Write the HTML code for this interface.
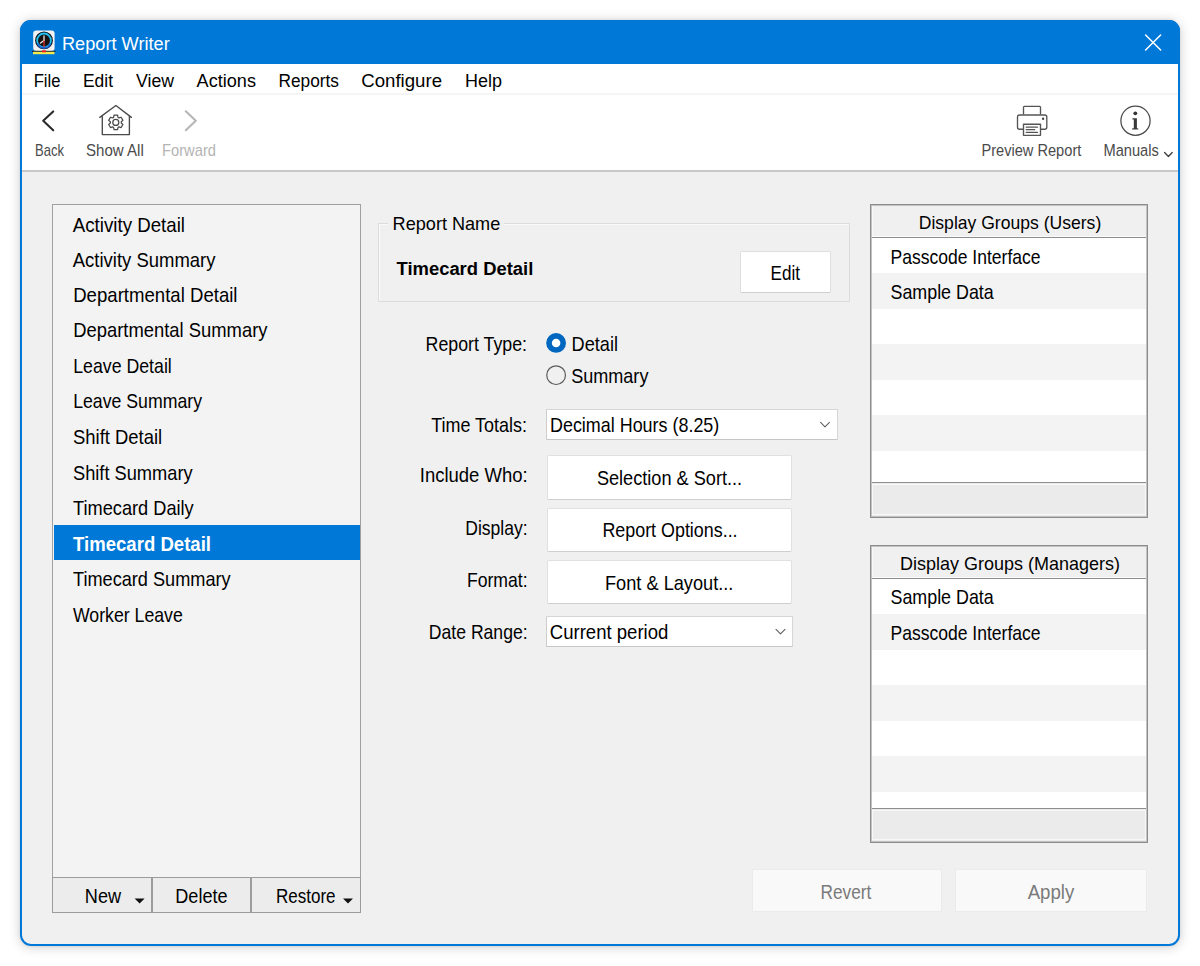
<!DOCTYPE html>
<html><head><meta charset="utf-8"><style>
html,body{margin:0;padding:0;}
body{width:1200px;height:966px;overflow:hidden;background:#fff;position:relative;font-family:"Liberation Sans",sans-serif;}
.t{position:absolute;white-space:nowrap;line-height:1;transform-origin:0 0;}
svg{position:absolute;overflow:visible;font-family:"Liberation Sans",sans-serif;}
</style></head><body>
<div style="position:absolute;left:20.00px;top:20.00px;width:1160.00px;height:926.00px;border-radius:11px;box-shadow:0 1px 12px rgba(0,0,0,0.2), 0 0 3px rgba(0,0,0,0.08);background:#f0f0f0;"></div>
<div style="position:absolute;left:20.00px;top:20.00px;width:1160.00px;height:926.00px;border-radius:11px;border:2px solid #0078d7;box-sizing:border-box;background:#f0f0f0;overflow:hidden;"></div>
<div style="position:absolute;left:20.00px;top:20.00px;width:1160.00px;height:44.00px;border-radius:11px 11px 0 0;background:#0078d7;"></div>
<div style="position:absolute;left:22.00px;top:64.00px;width:1156.00px;height:106.00px;background:#fff;"></div>
<div style="position:absolute;left:22.00px;top:93.00px;width:1156.00px;height:2.00px;background:#f5f5f5;"></div>
<div style="position:absolute;left:22.00px;top:170.00px;width:1156.00px;height:2.00px;background:#c8c8c8;"></div>
<div style="position:absolute;left:52.00px;top:204.00px;width:309.00px;height:709.00px;border:1px solid #a0a0a0;box-sizing:border-box;background:#f3f3f3;"></div>
<div style="position:absolute;left:54.00px;top:525.00px;width:306.00px;height:35.00px;background:#0078d7;"></div>
<div style="position:absolute;left:52.00px;top:877.00px;width:309.00px;height:36.00px;border:1px solid #9c9c9c;box-sizing:border-box;background:#ececec;"></div>
<div style="position:absolute;left:151.00px;top:877.00px;width:1.50px;height:36.00px;background:#9c9c9c;"></div>
<div style="position:absolute;left:250.00px;top:877.00px;width:1.50px;height:36.00px;background:#9c9c9c;"></div>
<div style="position:absolute;left:378.00px;top:223.00px;width:472.00px;height:79.00px;border:1px solid #dcdcdc;box-sizing:border-box;box-shadow:inset 1px 1px 0 #fafafa;"></div>
<div style="position:absolute;left:388.00px;top:214.00px;width:116.00px;height:22.00px;background:#f0f0f0;"></div>
<div style="position:absolute;left:740.00px;top:251.00px;width:91.00px;height:42.00px;background:#fff;border:1px solid #dedede;border-bottom-color:#cfcfcf;box-sizing:border-box;border-radius:2px;"></div>
<div style="position:absolute;left:546.00px;top:409.00px;width:292.00px;height:31.00px;background:#fff;border:1px solid #d6d6d6;border-left-color:#cdcdcd;border-bottom-color:#c6c6c6;box-sizing:border-box;border-radius:1px;"></div>
<div style="position:absolute;left:546.00px;top:616.00px;width:247.00px;height:31.00px;background:#fff;border:1px solid #d6d6d6;border-left-color:#cdcdcd;border-bottom-color:#c6c6c6;box-sizing:border-box;border-radius:1px;"></div>
<div style="position:absolute;left:547.00px;top:455.00px;width:245.00px;height:45.00px;background:#fff;border:1px solid #e0e0e0;border-bottom-color:#cfcfcf;box-sizing:border-box;border-radius:2px;"></div>
<div style="position:absolute;left:547.00px;top:508.00px;width:245.00px;height:44.00px;background:#fff;border:1px solid #e0e0e0;border-bottom-color:#cfcfcf;box-sizing:border-box;border-radius:2px;"></div>
<div style="position:absolute;left:547.00px;top:560.00px;width:245.00px;height:44.00px;background:#fff;border:1px solid #e0e0e0;border-bottom-color:#cfcfcf;box-sizing:border-box;border-radius:2px;"></div>
<div style="position:absolute;left:870.00px;top:204.00px;width:278.00px;height:314.00px;border:1px solid #8c8c8c;box-shadow:inset 0 0 0 1px #c2c2c2;box-sizing:border-box;background:#fff;"></div>
<div style="position:absolute;left:872.00px;top:206.00px;width:274.00px;height:31.00px;background:#f0f0f0;"></div>
<div style="position:absolute;left:872.00px;top:206.00px;width:274.00px;height:31.00px;border-left:1px solid #f8f8f8;border-bottom:1px solid #fbfbfb;box-sizing:border-box;"></div>
<div style="position:absolute;left:872.00px;top:237.00px;width:274.00px;height:1.00px;background:#8e8e8e;"></div>
<div style="position:absolute;left:872.00px;top:273.45px;width:274.00px;height:35.45px;background:#f3f3f3;"></div>
<div style="position:absolute;left:872.00px;top:344.35px;width:274.00px;height:35.45px;background:#f3f3f3;"></div>
<div style="position:absolute;left:872.00px;top:415.25px;width:274.00px;height:35.45px;background:#f3f3f3;"></div>
<div style="position:absolute;left:872.00px;top:482.00px;width:274.00px;height:1.00px;background:#8e8e8e;"></div>
<div style="position:absolute;left:872.00px;top:483.00px;width:274.00px;height:33.00px;background:#ebebeb;"></div>
<div style="position:absolute;left:872.00px;top:484.00px;width:274.00px;height:31.00px;border:1px solid #f8f8f8;box-sizing:border-box;"></div>
<div style="position:absolute;left:870.00px;top:545.00px;width:278.00px;height:298.00px;border:1px solid #8c8c8c;box-shadow:inset 0 0 0 1px #c2c2c2;box-sizing:border-box;background:#fff;"></div>
<div style="position:absolute;left:872.00px;top:547.00px;width:274.00px;height:31.00px;background:#f0f0f0;"></div>
<div style="position:absolute;left:872.00px;top:547.00px;width:274.00px;height:31.00px;border-left:1px solid #f8f8f8;border-bottom:1px solid #fbfbfb;box-sizing:border-box;"></div>
<div style="position:absolute;left:872.00px;top:578.00px;width:274.00px;height:1.00px;background:#8e8e8e;"></div>
<div style="position:absolute;left:872.00px;top:614.45px;width:274.00px;height:35.45px;background:#f3f3f3;"></div>
<div style="position:absolute;left:872.00px;top:685.35px;width:274.00px;height:35.45px;background:#f3f3f3;"></div>
<div style="position:absolute;left:872.00px;top:756.25px;width:274.00px;height:35.45px;background:#f3f3f3;"></div>
<div style="position:absolute;left:872.00px;top:808.00px;width:274.00px;height:1.00px;background:#8e8e8e;"></div>
<div style="position:absolute;left:872.00px;top:809.00px;width:274.00px;height:32.00px;background:#ebebeb;"></div>
<div style="position:absolute;left:872.00px;top:810.00px;width:274.00px;height:30.00px;border:1px solid #f8f8f8;box-sizing:border-box;"></div>
<div style="position:absolute;left:752.00px;top:869.00px;width:190.00px;height:43.00px;background:#f9f9f9;border:1px solid #ebebeb;box-sizing:border-box;border-radius:1px;"></div>
<div style="position:absolute;left:955.00px;top:869.00px;width:192.00px;height:43.00px;background:#f9f9f9;border:1px solid #ebebeb;box-sizing:border-box;border-radius:1px;"></div>
<svg style="left:0;top:0" width="1200" height="966" viewBox="0 0 1200 966">
 <!-- close X -->
 <g stroke="#fff" stroke-width="1.5" stroke-linecap="round"><line x1="1145.6" y1="35" x2="1160.6" y2="50"/><line x1="1160.6" y1="35" x2="1145.6" y2="50"/></g>
 <!-- back chevron -->
 <polyline points="53.2,111.4 43.2,120.8 53.2,130.3" fill="none" stroke="#2b2b2b" stroke-width="2.1" stroke-linecap="round" stroke-linejoin="round"/>
 <!-- forward chevron -->
 <polyline points="185.8,111.3 195.8,120.7 185.8,130.2" fill="none" stroke="#b6b6b6" stroke-width="2.1" stroke-linecap="round" stroke-linejoin="round"/>
 <!-- house -->
 <g fill="none" stroke="#4a4a4a" stroke-width="1.35" stroke-linecap="round" stroke-linejoin="round">
  <polyline points="99.8,117.4 115.9,105.5 131.4,117.4"/>
  <polyline points="102.3,116.3 102.3,134.6 129.4,134.6 129.4,116.3"/>
  <path d="M118.04,117.38 L117.59,115.22 L114.01,115.22 L113.56,117.38 L112.57,117.95 L110.48,117.26 L108.69,120.36 L110.33,121.83 L110.33,122.97 L108.69,124.44 L110.48,127.54 L112.57,126.85 L113.56,127.42 L114.01,129.58 L117.59,129.58 L118.04,127.42 L119.03,126.85 L121.12,127.54 L122.91,124.44 L121.27,122.97 L121.27,121.83 L122.91,120.36 L121.12,117.26 L119.03,117.95 Z" stroke-width="1.25"/>
  <circle cx="115.8" cy="122.4" r="3.0" stroke-width="1.25"/>
 </g>
 <!-- printer -->
 <g fill="none" stroke="#555" stroke-width="1.35" stroke-linejoin="round">
  <path d="M1023.5,114.5 L1023.5,107.2 Q1023.5,106.3 1024.4,106.3 L1039.6,106.3 Q1040.5,106.3 1040.5,107.2 L1040.5,114.5"/>
  <path d="M1023.3,129.2 L1019.5,129.2 Q1017.5,129.2 1017.5,127.2 L1017.5,117 Q1017.5,115 1019.5,115 L1044.8,115 Q1046.8,115 1046.8,117 L1046.8,127.2 Q1046.8,129.2 1044.8,129.2 L1040.8,129.2"/>
  <path d="M1023.5,124.2 L1040.5,124.2 L1040.5,135.3 L1023.5,135.3 Z"/>
  <line x1="1026.2" y1="127.2" x2="1037.5" y2="127.2" stroke-width="1.2" stroke-linecap="round"/>
  <line x1="1026.2" y1="129.7" x2="1034.8" y2="129.7" stroke-width="1.2" stroke-linecap="round"/>
  <line x1="1026.2" y1="132.4" x2="1037.5" y2="132.4" stroke-width="1.2" stroke-linecap="round"/>
 </g>
 <circle cx="1043.1" cy="118.8" r="1.2" fill="#444"/>
 <!-- info -->
 <circle cx="1135.5" cy="120.7" r="14.6" fill="none" stroke="#4a4a4a" stroke-width="1.25"/>
 <circle cx="1135.3" cy="113.3" r="1.9" fill="#333"/>
 <path d="M1132.4,118.3 L1136.9,118.3 L1136.9,128.3 L1138.3,128.6 L1138.3,129.6 L1132,129.6 L1132,128.6 L1133.8,128.3 L1133.8,119.6 L1132.4,119.4 Z" fill="#3a3a3a"/>
 <!-- manuals chevron -->
 <polyline points="1164.6,152.6 1168.4,156.6 1172.2,152.6" fill="none" stroke="#444" stroke-width="1.4" stroke-linecap="round" stroke-linejoin="round"/>
 <!-- combo chevrons -->
 <polyline points="820.6,422.3 825,426.8 829.4,422.3" fill="none" stroke="#606060" stroke-width="1.1" stroke-linecap="round" stroke-linejoin="round"/>
 <polyline points="776,629.3 780.5,633.8 785,629.3" fill="none" stroke="#606060" stroke-width="1.1" stroke-linecap="round" stroke-linejoin="round"/>
 <!-- radios -->
 <circle cx="556.1" cy="342.95" r="9.9" fill="#0067c0"/>
 <circle cx="556.1" cy="342.95" r="4.3" fill="#fff"/>
 <circle cx="556.1" cy="375.15" r="9.35" fill="none" stroke="#5a5a5a" stroke-width="1.2"/>
 <!-- dropdown triangles -->
 <path d="M134.6,898.4 L144.6,898.4 L139.6,903.6 Z" fill="#111"/>
 <path d="M343,898.4 L353,898.4 L348,903.6 Z" fill="#111"/>
 <!-- app icon -->
 <rect x="33.2" y="30.6" width="21.4" height="20.4" rx="3" fill="#f2f2f2"/>
 <circle cx="44" cy="40.4" r="8.9" fill="#0d1520"/>
 <circle cx="44" cy="40.4" r="6.9" fill="none" stroke="#22c0ee" stroke-width="1.8"/>
 <path d="M37.5,43.5 A7,7 0 0 0 50.5,43.5" fill="none" stroke="#1a5fd0" stroke-width="1.8"/>
 <circle cx="44" cy="40.4" r="5.2" fill="#1a1010"/>
 <g stroke="#e8e8e8" stroke-width="1.3" stroke-linecap="round"><line x1="44" y1="36" x2="44" y2="40.4"/><line x1="44" y1="40.4" x2="40.5" y2="43"/></g>
 <line x1="44" y1="40.4" x2="44" y2="47" stroke="#d03030" stroke-width="1.4"/>
 <rect x="32" y="50.8" width="23.5" height="1" fill="#1a1a1a"/>
 <rect x="33" y="51.8" width="21.5" height="2.4" fill="#f5e84a"/>
 <rect x="42" y="50.3" width="4" height="2" fill="#ee2020"/>
</svg>

<svg style="left:0;top:0" width="1200" height="966" viewBox="0 0 1200 966">
<text x="62.00" y="50" font-size="18.70" fill="#fff" textLength="107.70" lengthAdjust="spacingAndGlyphs">Report Writer</text>
<text x="33.70" y="87" font-size="18.70" fill="#000" textLength="26.88" lengthAdjust="spacingAndGlyphs">File</text>
<text x="83.00" y="87" font-size="18.70" fill="#000" textLength="30.01" lengthAdjust="spacingAndGlyphs">Edit</text>
<text x="136.00" y="87" font-size="18.70" fill="#000" textLength="37.95" lengthAdjust="spacingAndGlyphs">View</text>
<text x="196.60" y="87" font-size="18.70" fill="#000" textLength="59.39" lengthAdjust="spacingAndGlyphs">Actions</text>
<text x="278.50" y="87" font-size="18.70" fill="#000" textLength="60.48" lengthAdjust="spacingAndGlyphs">Reports</text>
<text x="361.25" y="87" font-size="18.70" fill="#000" textLength="80.77" lengthAdjust="spacingAndGlyphs">Configure</text>
<text x="465.00" y="87" font-size="18.70" fill="#000" textLength="36.99" lengthAdjust="spacingAndGlyphs">Help</text>
<text x="35.00" y="156" font-size="16.60" fill="#4a4a4a" textLength="28.98" lengthAdjust="spacingAndGlyphs">Back</text>
<text x="86.00" y="156" font-size="16.60" fill="#4a4a4a" textLength="57.76" lengthAdjust="spacingAndGlyphs">Show All</text>
<text x="162.00" y="156" font-size="16.60" fill="#b4b4b4" textLength="54.00" lengthAdjust="spacingAndGlyphs">Forward</text>
<text x="981.40" y="156" font-size="16.80" fill="#4a4a4a" textLength="99.92" lengthAdjust="spacingAndGlyphs">Preview Report</text>
<text x="1103.50" y="156" font-size="16.80" fill="#4a4a4a" textLength="55.30" lengthAdjust="spacingAndGlyphs">Manuals</text>
<text x="72.80" y="232" font-size="19.75" fill="#000" textLength="112.18" lengthAdjust="spacingAndGlyphs">Activity Detail</text>
<text x="72.80" y="267" font-size="19.75" fill="#000" textLength="142.71" lengthAdjust="spacingAndGlyphs">Activity Summary</text>
<text x="73.20" y="302" font-size="19.75" fill="#000" textLength="164.30" lengthAdjust="spacingAndGlyphs">Departmental Detail</text>
<text x="73.20" y="337" font-size="19.75" fill="#000" textLength="194.29" lengthAdjust="spacingAndGlyphs">Departmental Summary</text>
<text x="73.20" y="373" font-size="19.75" fill="#000" textLength="98.59" lengthAdjust="spacingAndGlyphs">Leave Detail</text>
<text x="73.20" y="408" font-size="19.75" fill="#000" textLength="128.82" lengthAdjust="spacingAndGlyphs">Leave Summary</text>
<text x="73.00" y="444" font-size="19.75" fill="#000" textLength="89.21" lengthAdjust="spacingAndGlyphs">Shift Detail</text>
<text x="73.00" y="480" font-size="19.75" fill="#000" textLength="119.60" lengthAdjust="spacingAndGlyphs">Shift Summary</text>
<text x="73.00" y="515" font-size="19.75" fill="#000" textLength="120.72" lengthAdjust="spacingAndGlyphs">Timecard Daily</text>
<text x="73.00" y="551" font-size="19.50" fill="#fff" textLength="137.99" lengthAdjust="spacingAndGlyphs" font-weight="bold">Timecard Detail</text>
<text x="73.00" y="586" font-size="19.75" fill="#000" textLength="157.59" lengthAdjust="spacingAndGlyphs">Timecard Summary</text>
<text x="73.00" y="622" font-size="19.75" fill="#000" textLength="109.79" lengthAdjust="spacingAndGlyphs">Worker Leave</text>
<text x="84.80" y="903" font-size="19.75" fill="#000" textLength="36.26" lengthAdjust="spacingAndGlyphs">New</text>
<text x="175.30" y="903" font-size="19.75" fill="#000" textLength="52.31" lengthAdjust="spacingAndGlyphs">Delete</text>
<text x="276.00" y="903" font-size="19.75" fill="#000" textLength="59.58" lengthAdjust="spacingAndGlyphs">Restore</text>
<text x="392.60" y="230" font-size="19.00" fill="#000" textLength="107.69" lengthAdjust="spacingAndGlyphs">Report Name</text>
<text x="396.50" y="275" font-size="18.80" fill="#000" textLength="136.79" lengthAdjust="spacingAndGlyphs" font-weight="bold">Timecard Detail</text>
<text x="770.60" y="280" font-size="19.75" fill="#000" textLength="29.41" lengthAdjust="spacingAndGlyphs">Edit</text>
<text x="425.60" y="351" font-size="19.75" fill="#000" textLength="101.40" lengthAdjust="spacingAndGlyphs">Report Type:</text>
<text x="571.60" y="351" font-size="19.75" fill="#000" textLength="46.39" lengthAdjust="spacingAndGlyphs">Detail</text>
<text x="571.20" y="383" font-size="19.75" fill="#000" textLength="77.22" lengthAdjust="spacingAndGlyphs">Summary</text>
<text x="431.20" y="432" font-size="19.75" fill="#000" textLength="95.80" lengthAdjust="spacingAndGlyphs">Time Totals:</text>
<text x="550.00" y="432" font-size="19.75" fill="#000" textLength="169.30" lengthAdjust="spacingAndGlyphs">Decimal Hours (8.25)</text>
<text x="419.75" y="482" font-size="19.75" fill="#000" textLength="107.83" lengthAdjust="spacingAndGlyphs">Include Who:</text>
<text x="596.90" y="485" font-size="19.75" fill="#000" textLength="145.19" lengthAdjust="spacingAndGlyphs">Selection &amp; Sort...</text>
<text x="465.25" y="535" font-size="19.75" fill="#000" textLength="62.34" lengthAdjust="spacingAndGlyphs">Display:</text>
<text x="602.40" y="537" font-size="19.75" fill="#000" textLength="135.19" lengthAdjust="spacingAndGlyphs">Report Options...</text>
<text x="466.90" y="587" font-size="19.75" fill="#000" textLength="60.70" lengthAdjust="spacingAndGlyphs">Format:</text>
<text x="605.00" y="590" font-size="19.75" fill="#000" textLength="128.40" lengthAdjust="spacingAndGlyphs">Font &amp; Layout...</text>
<text x="428.85" y="639" font-size="19.75" fill="#000" textLength="98.75" lengthAdjust="spacingAndGlyphs">Date Range:</text>
<text x="549.75" y="639" font-size="19.75" fill="#000" textLength="118.65" lengthAdjust="spacingAndGlyphs">Current period</text>
<text x="918.75" y="229" font-size="19.00" fill="#000" textLength="182.48" lengthAdjust="spacingAndGlyphs">Display Groups (Users)</text>
<text x="890.50" y="264" font-size="19.75" fill="#000" textLength="150.01" lengthAdjust="spacingAndGlyphs">Passcode Interface</text>
<text x="890.50" y="299" font-size="19.75" fill="#000" textLength="103.22" lengthAdjust="spacingAndGlyphs">Sample Data</text>
<text x="900.00" y="570" font-size="19.00" fill="#000" textLength="219.99" lengthAdjust="spacingAndGlyphs">Display Groups (Managers)</text>
<text x="890.50" y="604" font-size="19.75" fill="#000" textLength="103.22" lengthAdjust="spacingAndGlyphs">Sample Data</text>
<text x="890.50" y="640" font-size="19.75" fill="#000" textLength="150.01" lengthAdjust="spacingAndGlyphs">Passcode Interface</text>
<text x="820.50" y="899" font-size="19.75" fill="#7a7a7a" textLength="50.76" lengthAdjust="spacingAndGlyphs">Revert</text>
<text x="1027.70" y="899" font-size="19.75" fill="#7a7a7a" textLength="46.58" lengthAdjust="spacingAndGlyphs">Apply</text>
</svg>
</body></html>
